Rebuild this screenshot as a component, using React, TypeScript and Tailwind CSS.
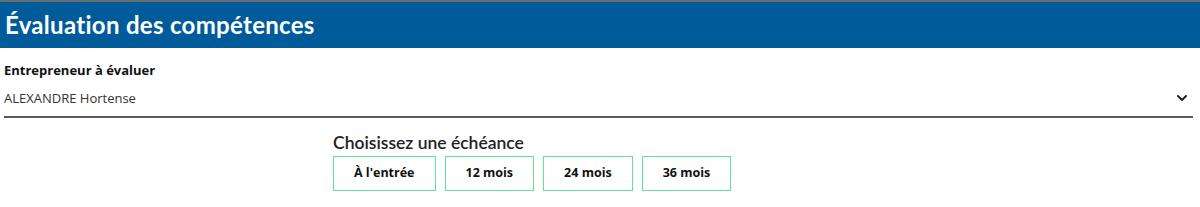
import { ChevronDown } from "lucide-react";

const echeances = ["À l'entrée", "12 mois", "24 mois", "36 mois"];

export default function App() {
    return (
        <div className="w-[1200px] h-[207px] bg-white overflow-hidden" style={{ fontFamily: '"Open Sans", sans-serif' }}>
            {/* Header */}
            <div className="border-t-2 border-[#6b6b6b] bg-[#005b9a] h-[48px] flex items-center px-[5px]">
                <h1 className="text-white text-[24px] font-bold tracking-[0.3px]" style={{ fontFamily: 'Lato, sans-serif' }}>
                    Évaluation des compétences
                </h1>
            </div>

            {/* Select */}
            <div className="px-[4px] pt-[13px] pr-[7px]">
                <label className="block text-[13px] font-bold text-[#111] leading-[18px]">Entrepreneur à évaluer</label>
                <div className="mt-[10px] flex items-center justify-between border-b-2 border-[#5a5a5a] pb-[9px]">
                    <span className="text-[13px] text-[#333] leading-[18px]">ALEXANDRE Hortense</span>
                    <ChevronDown size={16} strokeWidth={3} className="text-[#222] mr-[3px]" />
                </div>
            </div>

            {/* Echeance */}
            <div className="ml-[333px] mt-[14px]">
                <h2 className="text-[17.5px] font-semibold text-[#222] leading-[22px]" style={{ fontFamily: 'Lato, sans-serif' }}>
                    Choisissez une échéance
                </h2>
                <div className="flex gap-[9px] mt-[2px]">
                    {echeances.map((e) => (
                        <button
                            key={e}
                            className="h-[35px] px-[20px] border border-[#5fe39a] bg-white text-[12.5px] font-bold text-[#111]"
                        >
                            {e}
                        </button>
                    ))}
                </div>
            </div>
        </div>
    );
}
